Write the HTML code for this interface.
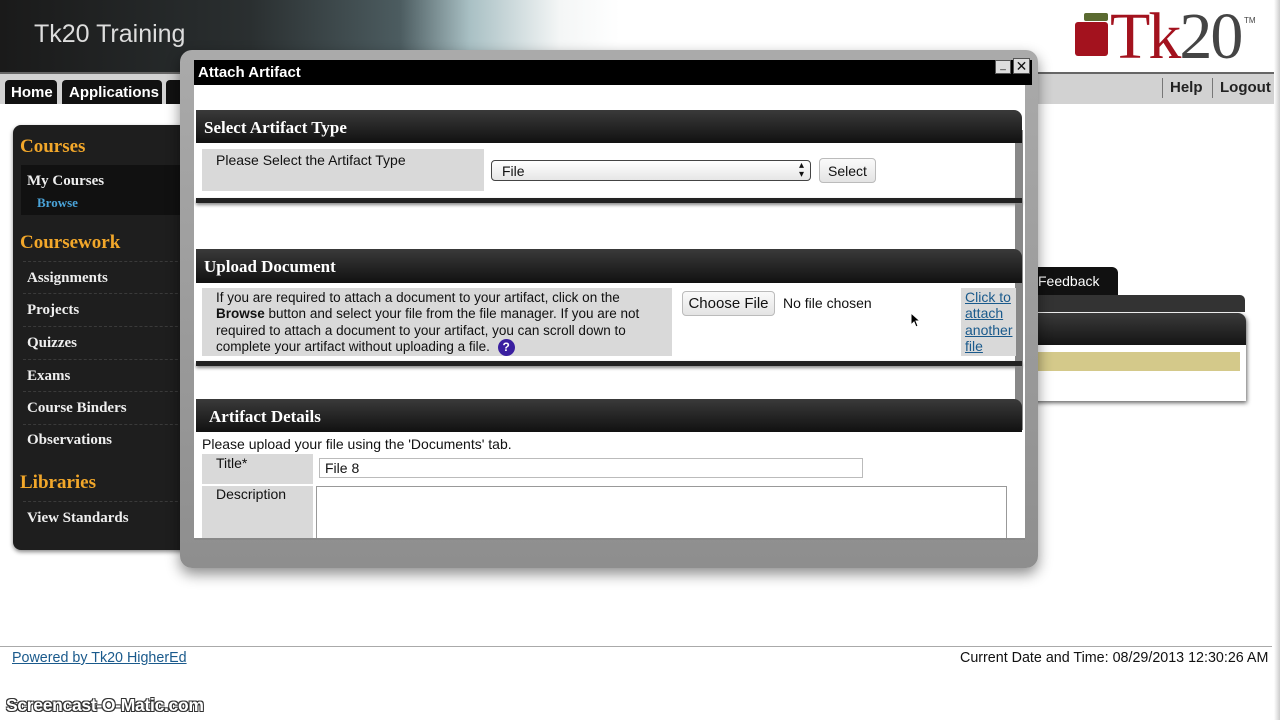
<!DOCTYPE html>
<html><head><meta charset="utf-8"><style>
*{margin:0;padding:0;box-sizing:border-box}
body{width:1280px;height:720px;overflow:hidden;background:#fff;position:relative;font-family:"Liberation Sans",sans-serif;font-size:14px;color:#111}
.a{position:absolute}
.serif{font-family:"Liberation Serif",serif;font-weight:bold}
.sh{background:linear-gradient(#3a3a3a,#111);color:#fff;font-family:"Liberation Serif",serif;font-weight:bold;font-size:17px;padding:8px 0 0 8px;border-radius:0 8px 0 0}
.side div.it{color:#eee;font-family:"Liberation Serif",serif;font-weight:bold;font-size:15px;position:absolute;left:14px}
.side .hd{color:#f2a72a;font-family:"Liberation Serif",serif;font-weight:bold;font-size:19px;position:absolute;left:7px}
.dl{position:absolute;left:10px;right:0;border-top:1px dashed #3a3a3a}
u{color:#1a5a8c}
</style></head><body>
<!-- header -->
<div class="a" style="left:0;top:0;width:1280px;height:74px;background:linear-gradient(90deg,#1a1a1a 0,#2a2f30 250px,#4c5c60 400px,#a9c0c4 470px,#f4f6f6 560px,#fff 620px)"></div>
<div class="a" style="left:34px;top:20px;font-size:25px;color:#ddd">Tk20 Training</div>
<div class="a" style="left:1075px;top:22px;width:33px;height:34px;background:#a3121e;border-radius:3px"></div>
<div class="a" style="left:1084px;top:13px;width:24px;height:8px;background:#5a6a30;border-radius:2px"></div>
<div class="a" style="left:1110px;top:4px;font-family:'Liberation Serif',serif;font-size:66px;color:#a3121e;line-height:1;letter-spacing:-2px">Tk<span style="color:#444">20</span></div>
<div class="a" style="left:1244px;top:16px;font-size:8px;color:#444">TM</div>
<!-- nav -->
<div class="a" style="left:0;top:72px;width:1280px;height:2px;background:#666"></div>
<div class="a" style="left:0;top:74px;width:1280px;height:30px;background:#d2d2d2"></div>
<div class="a" style="left:5px;top:80px;width:52px;height:24px;background:#111;border-radius:4px 4px 0 0;color:#fff;font-weight:bold;font-size:15px;padding:4px 0 0 6px">Home</div>
<div class="a" style="left:62px;top:80px;width:100px;height:24px;background:#111;border-radius:4px 4px 0 0;color:#fff;font-weight:bold;font-size:15px;padding:4px 0 0 7px">Applications</div>
<div class="a" style="left:166px;top:80px;width:20px;height:24px;background:#111;border-radius:4px 0 0 0"></div>
<div class="a" style="left:1162px;top:78px;height:20px;border-left:1px solid #777"></div>
<div class="a" style="left:1170px;top:79px;font-weight:bold;font-size:15px;color:#222">Help</div>
<div class="a" style="left:1212px;top:78px;height:20px;border-left:1px solid #777"></div>
<div class="a" style="left:1220px;top:79px;font-weight:bold;font-size:15px;color:#222">Logout</div>
<div class="a" style="left:1274px;top:0;width:6px;height:720px;background:linear-gradient(90deg,#fff,#ccc)"></div>
<!-- sidebar -->
<div class="a side" style="left:13px;top:125px;width:175px;height:425px;background:#1e1e1e;border-radius:8px 0 0 8px;box-shadow:0 2px 4px #888">
<div class="hd" style="top:11px">Courses</div>
<div class="a" style="left:8px;top:40px;width:167px;height:50px;background:#111"></div>
<div class="it" style="top:48px">My Courses</div>
<div class="a serif" style="left:24px;top:70px;color:#4aa3d8;font-size:13px">Browse</div>
<div class="hd" style="top:107px">Coursework</div>
<div class="dl" style="top:136px"></div>
<div class="it" style="top:145px">Assignments</div>
<div class="dl" style="top:168px"></div>
<div class="it" style="top:177px">Projects</div>
<div class="dl" style="top:201px"></div>
<div class="it" style="top:210px">Quizzes</div>
<div class="dl" style="top:234px"></div>
<div class="it" style="top:243px">Exams</div>
<div class="dl" style="top:266px"></div>
<div class="it" style="top:275px">Course Binders</div>
<div class="dl" style="top:299px"></div>
<div class="it" style="top:307px">Observations</div>
<div class="hd" style="top:347px">Libraries</div>
<div class="dl" style="top:376px"></div>
<div class="it" style="top:385px">View Standards</div>
</div>
<!-- right background panel -->
<div class="a" style="left:1030px;top:267px;width:88px;height:28px;background:#111;border-radius:0 6px 0 0;color:#fff;font-size:14px;padding:6px 0 0 8px">Feedback</div>
<div class="a" style="left:1030px;top:295px;width:215px;height:17px;background:#333;border-radius:0 5px 0 0"></div>
<div class="a" style="left:1030px;top:313px;width:216px;height:88px;background:#fff;border-radius:0 8px 0 0;box-shadow:1px 2px 4px #666;overflow:hidden"><div style="height:32px;background:linear-gradient(#3a3a3a,#151515)"></div><div style="margin:7px 6px 0 0;height:19px;background:#d4c98a"></div></div>
<!-- dialog -->
<div class="a" style="left:180px;top:50px;width:858px;height:518px;background:linear-gradient(#aaa,#8e8e8e);border-radius:12px;box-shadow:0 6px 14px rgba(0,0,0,.45)"></div>
<div class="a" style="left:194px;top:60px;width:838px;height:25px;background:#000;color:#fff;font-weight:bold;font-size:15px;padding:4px 0 0 4px">Attach Artifact</div>
<div class="a" style="left:995px;top:60px;width:16px;height:14px;background:#ddd;border:1px solid #555;font-size:10px;line-height:10px;text-align:center">_</div>
<div class="a" style="left:1013px;top:58px;width:17px;height:16px;background:#ddd;border:1px solid #555;font-size:14px;line-height:14px;text-align:center">✕</div>
<div class="a" style="left:194px;top:85px;width:831px;height:455px;background:#fff;overflow:hidden">
 <div class="a" style="left:821px;top:45px;width:8px;height:300px;background:#888"></div>
 <!-- section 1 -->
 <div class="a sh" style="left:2px;top:25px;width:826px;height:33px">Select Artifact Type</div>
 <div class="a" style="left:2px;top:113px;width:826px;height:5px;background:#222;box-shadow:0 2px 3px #888"></div>
 <div class="a" style="left:8px;top:64px;width:282px;height:42px;background:#d9d9d9;padding:3px 0 0 14px">Please Select the Artifact Type</div>
 <div class="a" style="left:297px;top:75px;width:320px;height:21px;border:1px solid #444;border-radius:4px;background:linear-gradient(#fff,#e6e6e6);padding:2px 0 0 10px">File<span style="position:absolute;right:6px;top:0;font-size:10px;line-height:9px">▴<br>▾</span></div>
 <div class="a" style="left:625px;top:73px;width:57px;height:25px;border:1px solid #bbb;border-radius:4px;background:linear-gradient(#fafafa,#e4e4e4);text-align:center;padding-top:4px">Select</div>
 <!-- section 2 -->
 <div class="a sh" style="left:2px;top:164px;width:826px;height:34px">Upload Document</div>
 <div class="a" style="left:2px;top:276px;width:826px;height:5px;background:#222;box-shadow:0 2px 3px #888"></div>
 <div class="a" style="left:8px;top:203px;width:470px;height:68px;background:#d9d9d9;padding:2px 0 0 14px;font-size:13.5px;line-height:16.4px">If you are required to attach a document to your artifact, click on the <b>Browse</b> button and select your file from the file manager. If you are not required to attach a document to your artifact, you can scroll down to complete your artifact without uploading a file. <span style="display:inline-block;width:17px;height:17px;border-radius:50%;background:#3a1fa0;color:#fff;font-size:12px;font-weight:bold;text-align:center;line-height:17px;margin-left:4px">?</span></div>
 <div class="a" style="left:488px;top:206px;width:93px;height:25px;border:1px solid #bbb;border-radius:4px;background:linear-gradient(#fafafa,#e4e4e4);font-size:15px;text-align:center;padding-top:3px">Choose File</div>
 <div class="a" style="left:589px;top:210px;font-size:14px">No file chosen</div>
 <div class="a" style="left:767px;top:203px;width:55px;height:68px;background:#d9d9d9;padding:1px 0 0 4px;font-size:14px;line-height:16.4px"><u>Click to attach another file</u></div>
 <!-- section 3 -->
 <div class="a sh" style="left:2px;top:314px;width:826px;height:33px;padding-left:13px">Artifact Details</div>
 <div class="a" style="left:8px;top:351px">Please upload your file using the 'Documents' tab.</div>
 <div class="a" style="left:8px;top:369px;width:111px;height:86px;background:#d9d9d9"></div>
 <div class="a" style="left:8px;top:399px;width:111px;height:2px;background:#fff"></div>
 <div class="a" style="left:22px;top:370px">Title*</div>
 <div class="a" style="left:22px;top:401px">Description</div>
 <div class="a" style="left:125px;top:373px;width:544px;height:20px;border:1px solid #bbb;padding:1px 0 0 5px">File 8</div>
 <div class="a" style="left:122px;top:401px;width:691px;height:60px;border:1px solid #999"></div>
 <div class="a" style="left:0;top:453px;width:831px;height:2px;background:#888"></div>
</div>
<!-- cursor -->
<svg class="a" style="left:910px;top:312px" width="10" height="16" viewBox="0 0 10 16"><path d="M1 1 L1 13 L4 10 L6 15 L8 14 L6 9 L10 9 Z" fill="#000" stroke="#fff" stroke-width="1"/></svg>
<!-- footer -->
<div class="a" style="left:0;top:646px;width:1272px;height:1px;background:#aaa"></div>
<div class="a" style="left:12px;top:650px;font-size:14.3px"><u>Powered by Tk20 HigherEd</u></div>
<div class="a" style="left:960px;top:650px;font-size:14.3px">Current Date and Time: 08/29/2013 12:30:26 AM</div>
<div class="a" style="left:6px;top:695px;font-size:17.5px;font-weight:bold;color:#fff;letter-spacing:-0.3px;text-shadow:-1px -1px 0 #333,1px -1px 0 #333,-1px 1px 0 #333,1px 1px 0 #333">Screencast-O-Matic.com</div>
</body></html>
